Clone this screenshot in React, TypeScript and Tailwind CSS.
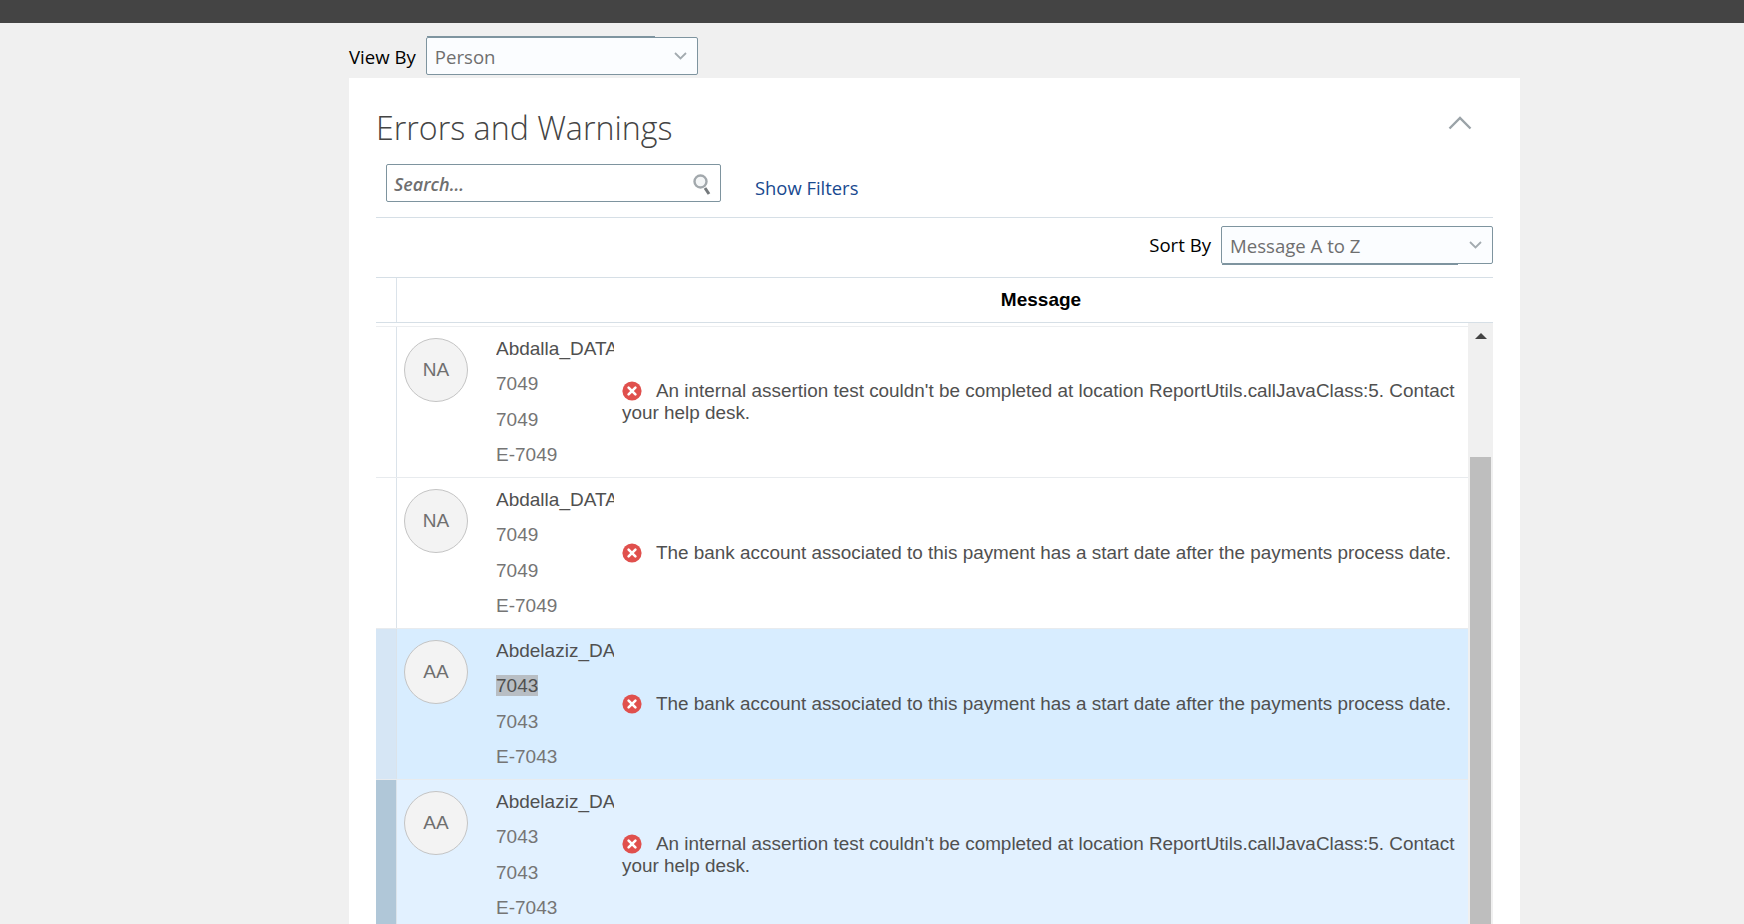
import React from "react";

const segoe = "font-['Open_Sans',sans-serif]";
const arial = "font-['Liberation_Sans',Arial,sans-serif]";

const ASSERTION =
  "An internal assertion test couldn't be completed at location ReportUtils.callJavaClass:5. Contact your help desk.";
const BANK = "The bank account associated to this payment has a start date after the payments process date.";

const rows = [
  { initials: "NA", name: "Abdalla_DATA_FIX", id: "7049", message: ASSERTION, row: "bg-white", gutter: "bg-white" },
  { initials: "NA", name: "Abdalla_DATA_FIX", id: "7049", message: BANK, row: "bg-white", gutter: "bg-white" },
  { initials: "AA", name: "Abdelaziz_DATA_FIX", id: "7043", message: BANK, row: "bg-[#d8edff]", gutter: "bg-[#d6e6f5]", picked: true },
  { initials: "AA", name: "Abdelaziz_DATA_FIX", id: "7043", message: ASSERTION, row: "bg-[#e2f1ff]", gutter: "bg-[#b0c7d8]" },
];

function Chevron() {
  return (
    <svg width="13" height="8" viewBox="0 0 13 8" fill="none" className="shrink-0 mr-px">
      <path d="M1 1 6.5 6.5 12 1" stroke="#a3abb0" strokeWidth="1.8" />
    </svg>
  );
}

function Select({ value, className, seam }: { value: string; className: string; seam: string }) {
  return (
    <div className={`relative flex items-center justify-between h-[38px] pl-2 pr-[9px] bg-[#fbfdff] border border-[#7e949f] rounded-[2px] ${className}`}>
      <span className={`${segoe} text-[18.6px] text-[#6f6f6f] translate-y-px`}>{value}</span>
      <Chevron />
      <div className={`absolute left-0 h-px bg-[#7e949f] ${seam}`} />
    </div>
  );
}

function ErrorIcon() {
  return (
    <svg width="20" height="20" viewBox="0 0 20 20" className="inline-block align-[-4px] mr-[14px]">
      <circle cx="10" cy="10" r="9.6" fill="#e0504d" />
      <path d="M6.6 6.6 13.4 13.4M13.4 6.6 6.6 13.4" stroke="#fff" strokeWidth="2.6" strokeLinecap="round" />
    </svg>
  );
}

function Row({ r }: { r: (typeof rows)[number] }) {
  return (
    <div className="flex h-[151px] shrink-0 border-b border-[#e8ebee]">
      <div className={`w-[21px] shrink-0 border-r border-[#dbe3ea] ${r.gutter}`} />
      <div className={`flex-1 flex min-w-0 ${r.row}`}>
        <div className="w-[72px] shrink-0 pl-[7px] pt-[11px]">
          <div className={`flex items-center justify-center w-[64px] h-[64px] rounded-full bg-[#f3f3f3] border border-[#c4c4c4] text-[19px] text-[#6f6f6f] ${arial}`}>
            {r.initials}
          </div>
        </div>
        <div className={`w-[118px] ml-[27px] shrink-0 overflow-hidden whitespace-nowrap pt-[4px] text-[19px] leading-[35.4px] ${arial}`}>
          <div className="text-[#505050]">{r.name}</div>
          <div className="text-[#757575]">
            {r.picked ? <span className="bg-[#b8bec4] text-[#505050]">{r.id}</span> : r.id}
          </div>
          <div className="text-[#757575]">{r.id}</div>
          <div className="text-[#757575]">E-{r.id}</div>
        </div>
        <div className="flex-1 flex items-center ml-2 pr-3">
          <p className={`text-[18.9px] leading-[22px] text-[#505050] ${arial}`}>
            <ErrorIcon />
            {r.message}
          </p>
        </div>
      </div>
    </div>
  );
}

export default function App() {
  return (
    <div className="h-screen overflow-hidden bg-[#f0f0f0]">
      <div className="h-[23px] bg-[#444444]" />
      <div className="ml-[349px] w-[1171px]">
        <div className="h-[55px] flex items-start gap-[10px] pt-[15px]">
          <span className={`${segoe} text-[18.6px] leading-[38px] text-black`}>View By</span>
          <Select value="Person" className="w-[272px] -mt-px" seam="-top-[2px] w-[228px]" />
        </div>
        <div className="bg-white pl-[27px] pr-[27px] h-[846px]">
          <div className="flex items-start justify-between h-[86px] pt-[28px]">
            <h1 className={`${segoe} font-light text-[32.2px] leading-[44px] text-[#444444]`}>Errors and Warnings</h1>
            <svg width="24" height="14" viewBox="0 0 24 14" fill="none" className="mt-[10px] mr-[21px]">
              <path d="M1.5 12.5 12 2 22.5 12.5" stroke="#9ba3a8" strokeWidth="2.4" />
            </svg>
          </div>
          <div className="flex items-start h-[54px] border-b border-[#d6dfe6] pl-[10px]">
            <div className="flex items-center justify-between w-[335px] h-[38px] pl-2 pr-[9px] border border-[#7e949f] rounded-[2px]">
              <span className={`${segoe} italic font-semibold text-[18px] text-[#6f6f6f] translate-y-px -ml-px`}>Search...</span>
              <svg width="18" height="22" viewBox="0 0 18 22" fill="none" className="translate-y-[2px]">
                <circle cx="7.5" cy="7.5" r="6" fill="#f4f6f7" stroke="#a2a8ac" strokeWidth="2.4" />
                <path d="M12 14 16 20" stroke="#74797c" strokeWidth="3" />
              </svg>
            </div>
            <a className={`${segoe} font-medium text-[18.4px] text-[#18498f] ml-[34px] mt-[10px]`}>Show Filters</a>
          </div>
          <div className="flex items-start justify-end gap-[10px] h-[60px] pt-[8px] border-b border-[#d6dfe6]">
            <span className={`${segoe} text-[18.6px] leading-[38px] text-black`}>Sort By</span>
            <Select value="Message A to Z" className="w-[272px]" seam="-bottom-[2px] w-[236px]" />
          </div>
          <div className="flex h-[45px] border-b border-[#d6dfe6]">
            <div className="w-[21px] border-r border-[#dbe3ea]" />
            <div className={`flex-1 flex items-center justify-center pl-[217px] pr-[25px] text-[19px] font-bold text-black ${arial}`}>Message</div>
          </div>
          <div className="flex">
            <div className="flex-1 min-w-0 flex flex-col pt-[3px]">
              <div className="h-px bg-[#eceef0]" />
              {rows.map((r, i) => (
                <Row key={i} r={r} />
              ))}
            </div>
            <div className="w-[25px] shrink-0 bg-[#f0f0f0] flex flex-col items-center">
              <div className="h-[134px] pt-[10px]">
                <div className="w-0 h-0 border-x-[6px] border-x-transparent border-b-[6px] border-b-[#444444]" />
              </div>
              <div className="w-[21px] flex-1 bg-[#bebebe]" />
            </div>
          </div>
        </div>
      </div>
    </div>
  );
}
